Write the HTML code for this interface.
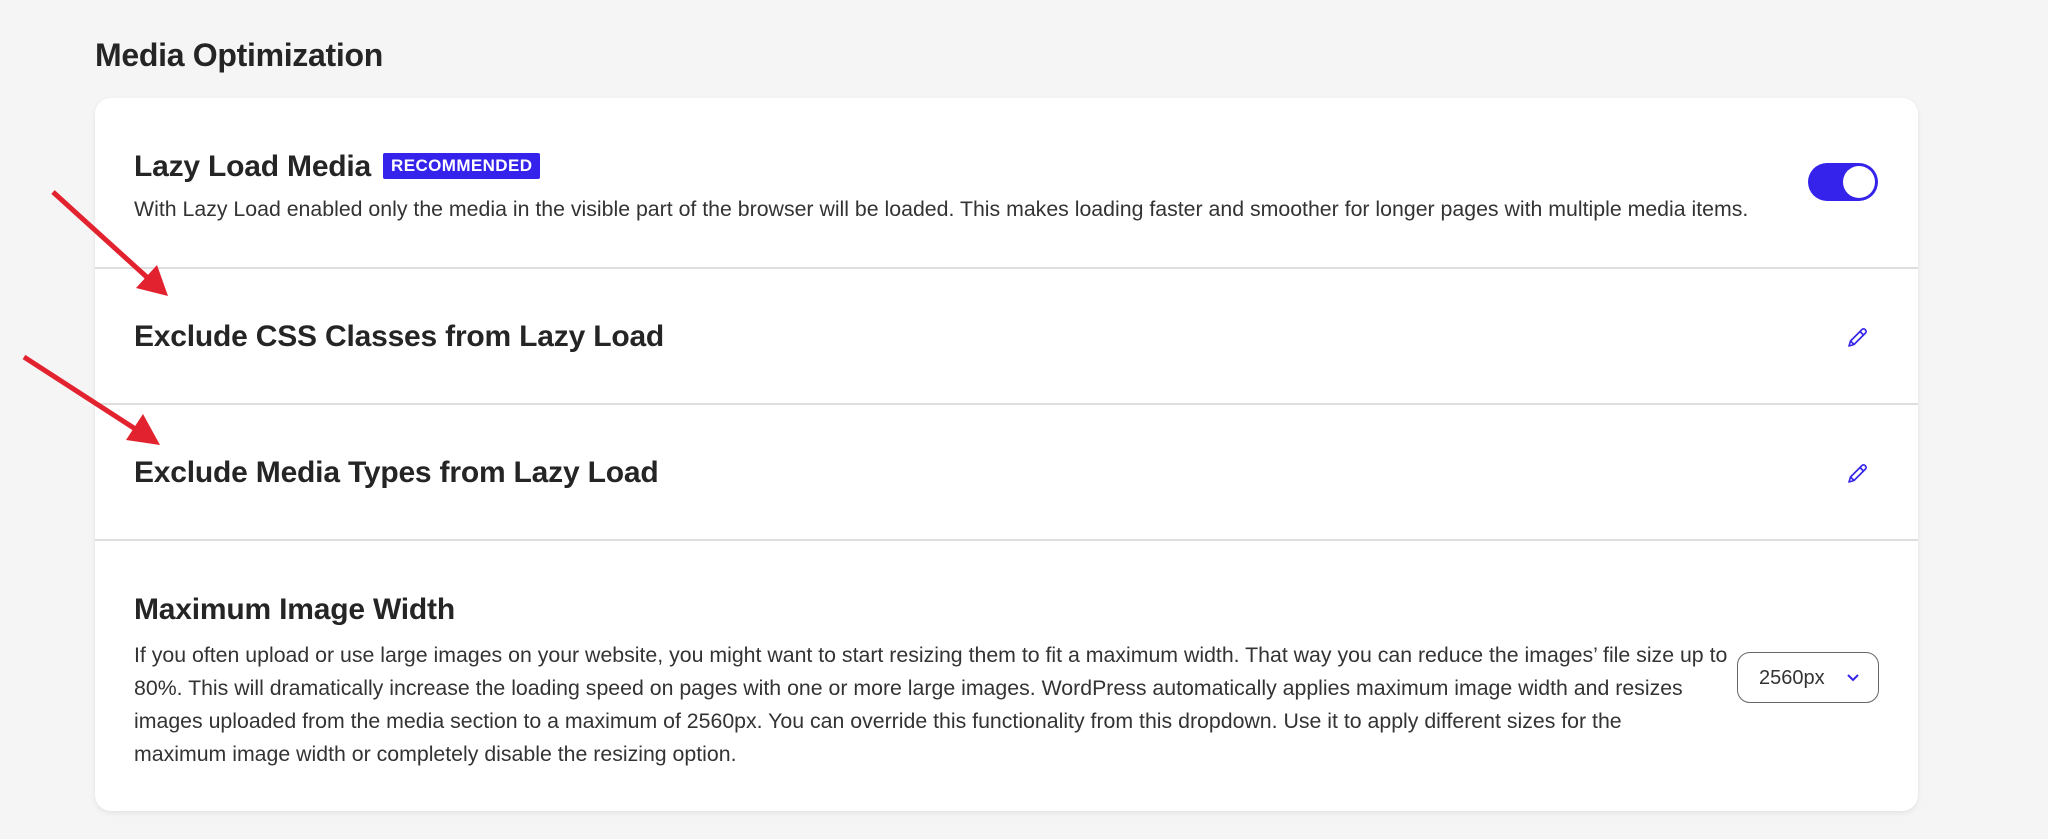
<!DOCTYPE html>
<html><head><meta charset="utf-8"><style>
*{margin:0;padding:0;box-sizing:border-box}
body{width:2048px;height:839px;background:#f5f5f5;font-family:"Liberation Sans",sans-serif;color:#2a2a2a;position:relative;overflow:hidden}
h1{position:absolute;left:95px;top:37px;font-size:32px;font-weight:700;color:#252525;letter-spacing:-0.3px}
.card{position:absolute;left:95px;top:98px;width:1823px;height:713px;background:#fff;border-radius:16px;box-shadow:0 2px 6px rgba(0,0,0,.08)}
.sep{position:absolute;left:0;right:0;height:2px;background:#dedede}
.h{position:absolute;left:39px;font-size:30px;font-weight:700;color:#252525;letter-spacing:-0.2px}
.p{position:absolute;left:39px;font-size:21.3px;color:#333;line-height:33px;white-space:nowrap}
.badge{display:inline-block;background:#3523ec;color:#fff;font-size:17px;font-weight:700;padding:3px 8px;border-radius:2px;vertical-align:5px;margin-left:12px;letter-spacing:.4px}
.tog{position:absolute;left:1713px;top:65px;width:70px;height:38px;border-radius:19px;background:#3523ec}
.tog::after{content:"";position:absolute;right:3px;top:3px;width:32px;height:32px;border-radius:50%;background:#fff}
.pen{position:absolute;left:1751px}
.sel{position:absolute;left:1642px;top:554px;width:142px;height:51px;border:1.5px solid #666;border-radius:13px;font-size:20px;color:#333;padding:14px 0 0 21px}
</style></head><body>
<h1>Media Optimization</h1>
<div class="card">
<div class="h" style="top:52px">Lazy Load Media<span class="badge">RECOMMENDED</span></div>
<div class="p" style="top:95px">With Lazy Load enabled only the media in the visible part of the browser will be loaded. This makes loading faster and smoother for longer pages with multiple media items.</div>
<div class="tog"></div>
<div class="sep" style="top:169px"></div>
<div class="h" style="top:222px">Exclude CSS Classes from Lazy Load</div>
<svg class="pen" style="top:227px" width="24" height="24" viewBox="0 0 24 24" fill="none" stroke="#3523ec" stroke-width="1.6" stroke-linejoin="round"><path d="M3 21l1.5-5L16 4.5a2 2 0 0 1 3 0l.5.5a2 2 0 0 1 0 3L8 19.5z"/><path d="M14 6.5l3.5 3.5M4.5 16l3.5 3.5"/></svg>
<div class="sep" style="top:305px"></div>
<div class="h" style="top:358px">Exclude Media Types from Lazy Load</div>
<svg class="pen" style="top:363px" width="24" height="24" viewBox="0 0 24 24" fill="none" stroke="#3523ec" stroke-width="1.6" stroke-linejoin="round"><path d="M3 21l1.5-5L16 4.5a2 2 0 0 1 3 0l.5.5a2 2 0 0 1 0 3L8 19.5z"/><path d="M14 6.5l3.5 3.5M4.5 16l3.5 3.5"/></svg>
<div class="sep" style="top:441px"></div>
<div class="h" style="top:495px">Maximum Image Width</div>
<div class="p" style="top:541px">If you often upload or use large images on your website, you might want to start resizing them to fit a maximum width. That way you can reduce the images’ file size up to<br>80%. This will dramatically increase the loading speed on pages with one or more large images. WordPress automatically applies maximum image width and resizes<br>images uploaded from the media section to a maximum of 2560px. You can override this functionality from this dropdown. Use it to apply different sizes for the<br>maximum image width or completely disable the resizing option.</div>
<div class="sel">2560px<svg style="position:absolute;right:18px;top:20px" width="14" height="10" viewBox="0 0 14 10" fill="none" stroke="#3523ec" stroke-width="2"><path d="M2 2l5 5 5-5"/></svg></div>
</div>
<svg style="position:absolute;left:0;top:0" width="300" height="500">
<g stroke="#e2222f" stroke-width="5" fill="#e2222f">
<line x1="53" y1="192" x2="150" y2="280"/><polygon points="168,296 136,288 157,265" stroke="none"/>
<line x1="24" y1="357" x2="140" y2="432"/><polygon points="160,445 126,440 143,414" stroke="none"/>
</g></svg>
</body></html>
